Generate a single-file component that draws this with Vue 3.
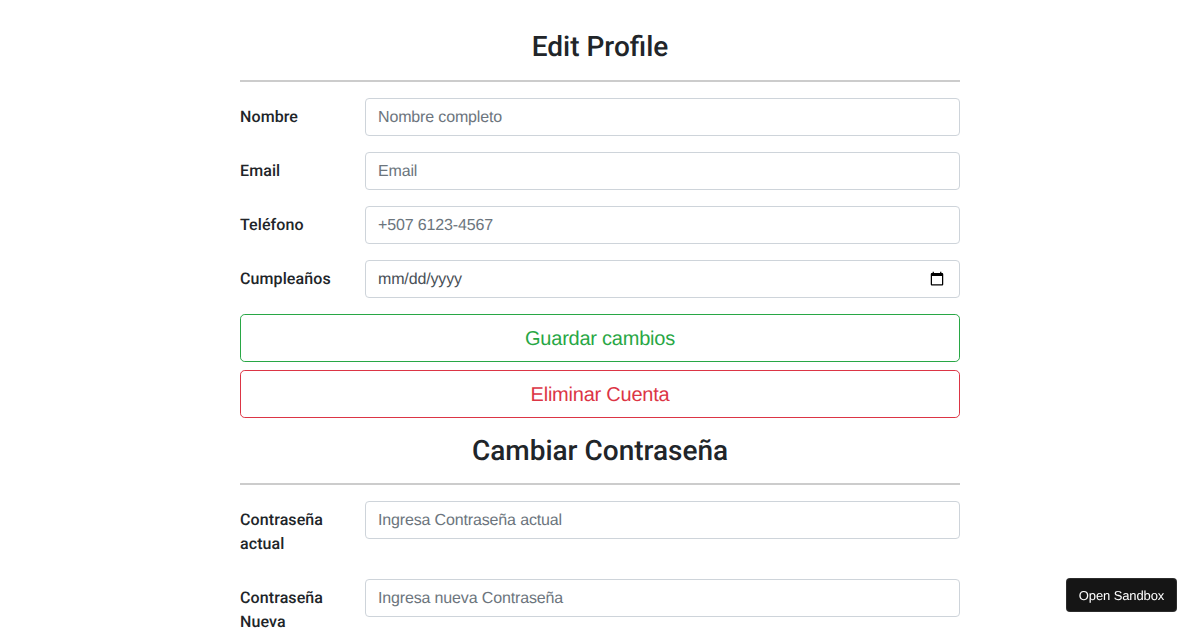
<template>
  <div class="page">
    <form class="profile" @submit.prevent>
      <h2 class="title">Edit Profile</h2>
      <hr class="divider" />
      <div v-for="field in profileFields" :key="field.label" class="row">
        <label class="label">{{ field.label }}</label>
        <input class="input" :type="field.type" :placeholder="field.placeholder" />
      </div>
      <button class="btn btn-save" type="button">Guardar cambios</button>
      <button class="btn btn-delete" type="button">Eliminar Cuenta</button>

      <h2 class="title title-second">Cambiar Contraseña</h2>
      <hr class="divider" />
      <div v-for="field in passwordFields" :key="field.label" class="row">
        <label class="label">{{ field.label }}</label>
        <input class="input" type="password" :placeholder="field.placeholder" />
      </div>
    </form>
    <button class="sandbox" type="button">Open Sandbox</button>
  </div>
</template>

<script setup>
const profileFields = [
  { label: 'Nombre', type: 'text', placeholder: 'Nombre completo' },
  { label: 'Email', type: 'email', placeholder: 'Email' },
  { label: 'Teléfono', type: 'tel', placeholder: '+507 6123-4567' },
  { label: 'Cumpleaños', type: 'date', placeholder: '' }
]

const passwordFields = [
  { label: 'Contraseña actual', placeholder: 'Ingresa Contraseña actual' },
  { label: 'Contraseña Nueva', placeholder: 'Ingresa nueva Contraseña' }
]
</script>

<style>
html,
body {
  margin: 0;
  height: 630px;
  overflow: hidden;
  background: #fff;
}
</style>

<style scoped>
.page {
  font-family: "Liberation Sans", Arial, sans-serif;
  color: #212529;
  text-rendering: geometricPrecision;
}

.profile {
  width: 720px;
  margin: 0 auto;
  padding-top: 30px;
}

.title {
  margin: 0;
  font-family: Roboto, sans-serif;
  font-size: 28px;
  font-weight: 500;
  line-height: 33.6px;
  text-align: center;
}

.title-second {
  margin-top: 16px;
}

.divider {
  height: 2px;
  margin: 16px 0;
  border: 0;
  background: #ccc;
}

.row {
  display: flex;
  margin-bottom: 16px;
}

.label {
  flex: 0 0 125px;
  box-sizing: border-box;
  width: 125px;
  padding: 7px 30px 7px 0;
  font-family: Roboto, sans-serif;
  font-size: 16px;
  font-weight: 500;
  letter-spacing: 0.1px;
  line-height: 24px;
}

.input {
  flex: 1;
  min-width: 0;
  box-sizing: border-box;
  height: 38px;
  padding: 7px 12px 5px;
  border: 1px solid #ced4da;
  border-radius: 4px;
  background: #fff;
  color: #495057;
  font-family: "Liberation Sans", Arial, sans-serif;
  font-size: 16px;
  letter-spacing: -0.15px;
  line-height: 24px;
  text-rendering: geometricPrecision;
}

.input::placeholder {
  color: #6c757d;
}

.input::-webkit-datetime-edit,
.input::-webkit-datetime-edit-fields-wrapper,
.input::-webkit-datetime-edit-month-field,
.input::-webkit-datetime-edit-day-field,
.input::-webkit-datetime-edit-year-field {
  padding: 0;
}

.input::-webkit-calendar-picker-indicator {
  position: relative;
  top: -1px;
}

.btn {
  display: block;
  width: 100%;
  height: 48px;
  margin-bottom: 8px;
  padding: 9px 16px 7px;
  border: 1px solid;
  border-radius: 4.8px;
  background: transparent;
  font-family: "Liberation Sans", Arial, sans-serif;
  font-size: 20px;
  letter-spacing: -0.23px;
  line-height: 30px;
  text-rendering: geometricPrecision;
}

.btn-save {
  border-color: #28a745;
  color: #28a745;
}

.btn-delete {
  border-color: #dc3545;
  color: #dc3545;
}

.sandbox {
  position: fixed;
  right: 23px;
  bottom: 18px;
  width: 111px;
  height: 34px;
  padding: 0;
  border: 1px solid rgba(255, 255, 255, 0.1);
  border-radius: 4px;
  background: #151515;
  color: #fff;
  font-family: "Liberation Sans", Arial, sans-serif;
  font-size: 13px;
  letter-spacing: -0.12px;
  text-rendering: geometricPrecision;
}
</style>
